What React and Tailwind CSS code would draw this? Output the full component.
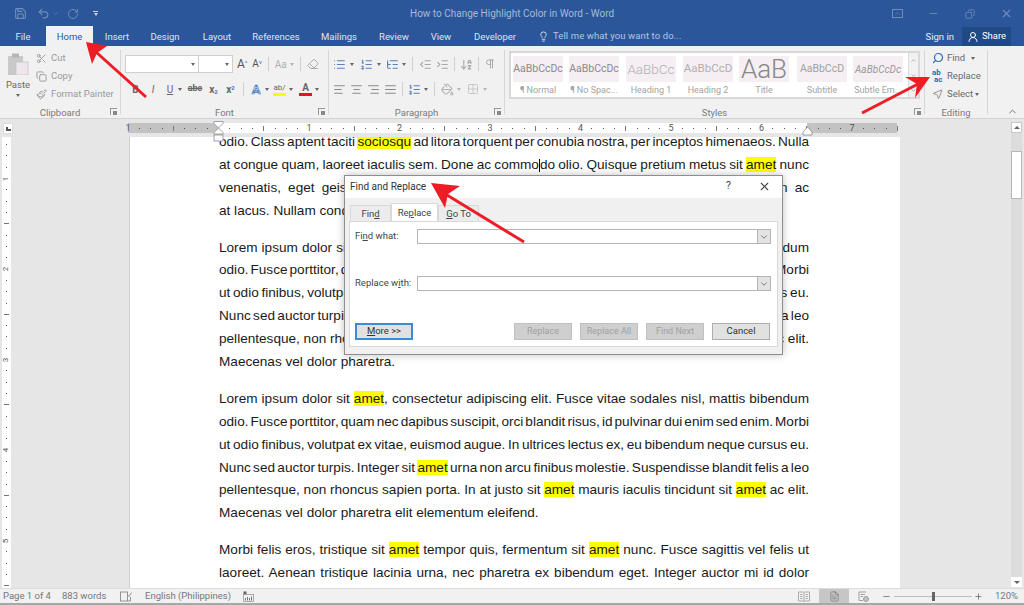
import React from "react";
import {
  Save, Undo2, RotateCw, Scissors, Copy, Paintbrush, Search, Lightbulb, MousePointer2, X, Minus, Plus,
  ChevronDown, ChevronUp, AlignLeft, AlignCenter, AlignRight, AlignJustify, List, ListOrdered, ListTree,
  IndentDecrease, IndentIncrease, ArrowDownAZ, Pilcrow, PaintBucket, Grid2x2, UserRound,
  Eraser, FileText,
} from "lucide-react";

const Caret = ({ c = "border-t-[#666]" }) => (
  <span className={`inline-block w-0 h-0 border-x-[2.5px] border-x-transparent border-t-[3px] ${c}`} />
);

const Launcher = () => (
  <span className="absolute right-[3px] bottom-[3px] w-[7px] h-[7px] border-l border-t border-[#999]">
    <span className="block w-[4px] h-[4px] ml-[2px] mt-[2px] bg-[#8a8a8a]" />
  </span>
);

const Label = ({ children }) => (
  <div className="h-[15px] pt-[4px] leading-[12px] text-center text-[9.5px] text-[#7a7a7a]">{children}</div>
);

const Group = ({ w, label, children }) => (
  <div className={`relative flex flex-col shrink-0 ${w}`}>
    <div className="flex-1 min-h-0">{children}</div>
    <Label>{label}</Label>
    <Launcher />
  </div>
);

const Sep = () => <div className="w-px my-[4px] bg-[#d6d6d6] shrink-0" />;
const VBar = ({ cls = "mx-[6px]" }) => <span className={`${cls} w-px h-[14px] bg-[#d0d0d0] shrink-0`} />;

const Tab = ({ w, children }) => <div className={`${w} text-center leading-[19px] whitespace-nowrap`}>{children}</div>;

const Style = ({ sample, label, cls = "text-[10.5px] text-[#8a8a8a]", ml = "ml-[6px]" }) => (
  <div className={`w-[50px] ${ml} shrink-0 flex flex-col items-center`}>
    <div className={`w-full h-[26px] bg-[#f5eff3] overflow-hidden whitespace-nowrap flex items-center justify-center ${cls}`}>
      {sample}
    </div>
    <div className="mt-[1px] text-[9px] leading-[14px] text-[#a3a3a3] whitespace-nowrap">{label}</div>
  </div>
);

const H = ({ children }) => <span className="bg-[#ffff00]">{children}</span>;

const Line = ({ children, last }) => (
  <div className={`h-[22.9px] leading-[22.9px] whitespace-nowrap ${last ? "" : "text-justify [text-align-last:justify] [word-spacing:-2.2px]"}`}>
    {children}
  </div>
);

const Para = ({ children }) => <div className="mb-[14px]">{children}</div>;

const Arrow = ({ line, head }) => (
  <g>
    <line x1={line[0]} y1={line[1]} x2={line[2]} y2={line[3]} stroke="#ee1c25" strokeWidth="3" />
    <polygon points={head} fill="#ee1c25" />
  </g>
);

const PasteIcon = () => (
  <svg width="22" height="22" viewBox="0 0 22 22">
    <rect x="1" y="3" width="15" height="19" fill="#c9c9c9" />
    <rect x="5" y="0.5" width="7" height="4" fill="#b5b5b5" />
    <rect x="9" y="9" width="12" height="13" fill="#efe6ec" stroke="#c4bcc2" strokeWidth="0.7" />
  </svg>
);

const BookIcon = ({ cls = "" }) => (
  <svg width="12" height="11" viewBox="0 0 12 11" fill="none" stroke="#8a8a8a" strokeWidth="0.9" className={cls}>
    <rect x="0.5" y="1" width="7" height="9" />
    <path d="M7.5 4 L9 5.5 L11.5 1.5" />
    <path d="M7.5 10 H10.5 V6" />
  </svg>
);

const ReadIcon = ({ cls = "" }) => (
  <svg width="12" height="11" viewBox="0 0 12 11" fill="none" stroke="#a5a5a5" strokeWidth="0.9" className={cls}>
    <path d="M0.5 1 H5.5 L6 1.5 L6.5 1 H11.5 V10 H6.5 L6 10.5 L5.5 10 H0.5 Z M6 1.5 V10.5" />
    <path d="M2 3.5 H4.5 M2 5.5 H4.5 M2 7.5 H4.5 M7.5 3.5 H10 M7.5 5.5 H10 M7.5 7.5 H10" />
  </svg>
);

const WebIcon = ({ cls = "" }) => (
  <svg width="11" height="11" viewBox="0 0 11 11" fill="none" stroke="#999" strokeWidth="0.9" className={cls}>
    <path d="M8 1 H1 V9.5 H5" />
    <path d="M2.5 3.5 H7 M2.5 5.5 H5" />
    <circle cx="8" cy="8" r="2.5" fill="#c0c0c0" />
  </svg>
);

const MacroIcon = ({ cls = "" }) => (
  <svg width="11" height="11" viewBox="0 0 11 11" className={cls}>
    <rect x="0.5" y="0.5" width="3" height="3" fill="#666" />
    <rect x="0.5" y="3.5" width="10" height="7" fill="none" stroke="#999" strokeWidth="0.8" />
    <path d="M2.5 9.5 V7 M4.5 9.5 V6 M6.5 9.5 V7 M8.5 9.5 V5.5" stroke="#777" strokeWidth="1" />
  </svg>
);

const IndentMarker = () => (
  <svg width="11" height="21" viewBox="0 0 11 21" fill="#fff" stroke="#8c8c8c" strokeWidth="0.8">
    <path d="M1 0.5 H10 V2.5 L5.5 7 L1 2.5 Z" />
    <path d="M5.5 7 L10 11.5 V13 H1 V11.5 Z" />
    <rect x="1" y="14" width="9" height="6" />
  </svg>
);

const HTicks = Array.from({ length: 69 }, (_, i) => i);
const VTicks = Array.from({ length: 40 }, (_, i) => i);

const Tick = ({ i }) => {
  const n = i % 8 === 0 ? Math.abs(i / 8 - 1) : null;
  return (
    <div className="w-[11.325px] shrink-0 flex items-center justify-center">
      {n !== null && i !== 8 ? (
        <span className="text-[9px] leading-none text-[#555]">{n}</span>
      ) : i % 8 === 4 ? (
        <span className="w-px h-[5px] bg-[#777]" />
      ) : i === 8 ? null : (
        <span className="w-px h-px bg-[#555]" />
      )}
    </div>
  );
};

const VTick = ({ i }) => {
  const n = i % 8 === 3 ? (i - 3) / 8 + 1 : null;
  return (
    <div className="h-[11.325px] shrink-0 flex items-center justify-center">
      {n !== null ? (
        <span className="text-[8px] leading-none text-[#555] -rotate-90">{n}</span>
      ) : i % 8 === 7 ? (
        <span className="h-px w-[5px] bg-[#777]" />
      ) : (
        <span className="w-px h-px bg-[#555]" />
      )}
    </div>
  );
};

const DlgInput = () => (
  <div className="ml-[7px] w-[354px] h-[15px] flex justify-end border border-[#b4b4b4] bg-white">
    <div className="w-[13px] bg-[#e3e3e3] border-l border-[#b4b4b4] flex items-center justify-center">
      <ChevronDown size={10} className="text-[#666]" />
    </div>
  </div>
);

const DisabledBtn = ({ children }) => (
  <div className="w-[58px] h-[17px] ml-[8px] bg-[#cfcfcf] border border-[#c0c0c0] flex items-center justify-center text-[9px] text-[#a0a0a0]">
    {children}
  </div>
);

export default function App() {
  return (
    <div className="relative w-[1024px] h-[605px] overflow-hidden flex flex-col bg-[#e6e6e6] font-['Roboto',sans-serif] text-[#555]">
      {/* Title bar */}
      <div className="h-[27px] shrink-0 bg-[#2b579a] flex items-center relative">
        <Save size={13} className="ml-[14px] text-[#6f8dbb]" />
        <Undo2 size={13} className="ml-[10px] text-[#6f8dbb]" />
        <ChevronDown size={7} className="ml-[2px] text-[#6f8dbb]" />
        <RotateCw size={12} className="ml-[8px] text-[#6f8dbb]" />
        <div className="ml-[14px] flex flex-col items-center gap-[1px]">
          <span className="w-[5px] h-px bg-[#c5d2e6]" />
          <Caret c="border-t-[#c5d2e6]" />
        </div>
        <div className="absolute left-[410px] top-[6px] text-[10px] leading-[16px] text-[#a5b9d8] whitespace-nowrap">
          How to Change Highlight Color in Word - Word
        </div>
        <div className="ml-auto flex items-center text-[#6f8dbb]">
          <div className="w-[11px] h-[9px] border border-[#6f8dbb] flex items-center justify-center">
            <ChevronUp size={7} />
          </div>
          <Minus size={11} className="ml-[25px]" />
          <Copy size={10} className="ml-[26px] -scale-x-100" />
          <X size={13} className="ml-[25px] mr-[11px]" />
        </div>
      </div>

      {/* Tabs */}
      <div className="h-[19px] shrink-0 bg-[#2b579a] flex items-stretch text-[9.5px] text-[#dce4f0] relative">
        <Tab w="w-[46px]">File</Tab>
        <div className="w-[47px] -mt-[1px] bg-[#f1f1f1] text-[#2b579a] text-center leading-[21px]">Home</div>
        <Tab w="w-[48px]">Insert</Tab>
        <Tab w="w-[48px]">Design</Tab>
        <Tab w="w-[56px]">Layout</Tab>
        <Tab w="w-[62px]">References</Tab>
        <Tab w="w-[64px]">Mailings</Tab>
        <Tab w="w-[46px]">Review</Tab>
        <Tab w="w-[48px]">View</Tab>
        <Tab w="w-[60px]">Developer</Tab>
        <div className="ml-[13px] flex items-center text-[#b4c5de]">
          <Lightbulb size={11} className="text-[#dce4f0]" />
          <span className="ml-[4px] tracking-[0.1px]">Tell me what you want to do...</span>
        </div>
        <div className="ml-auto leading-[19px] text-[#e8edf5]">Sign in</div>
        <div className="ml-[8px] mr-[13px] w-[49px] bg-[#1f4a85] flex items-center justify-center gap-[3px] text-white">
          <UserRound size={12} />
          <span>Share</span>
        </div>
      </div>

      {/* Ribbon */}
      <div className="h-[73px] shrink-0 bg-[#f1f1f1] border-b border-[#d2d2d2] flex text-[#8c8c8c] text-[9.5px]">
        <Group w="w-[120px]" label="Clipboard">
          <div className="flex h-full">
            <div className="w-[36px] flex flex-col items-center pt-[7px]">
              <PasteIcon />
              <div className="mt-[4px] text-[#6a6a6a] leading-[12px]">Paste</div>
              <div className="mt-[3px] flex"><Caret /></div>
            </div>
            <div className="flex flex-col pt-[3px] text-[#9a9a9a]">
              <div className="h-[18px] flex items-center gap-[4px]"><Scissors size={11} /><span>Cut</span></div>
              <div className="h-[18px] flex items-center gap-[4px]"><Copy size={11} /><span>Copy</span></div>
              <div className="h-[18px] flex items-center gap-[4px] whitespace-nowrap"><Paintbrush size={11} /><span>Format Painter</span></div>
            </div>
          </div>
        </Group>
        <Sep />
        <Group w="w-[207px]" label="Font">
          <div className="pt-[9px] pl-[4px] flex flex-col">
            <div className="flex items-center h-[18px]">
              <div className="w-[74px] h-[18px] bg-white border border-[#d0d0d0] flex items-center justify-end pr-[3px]"><Caret /></div>
              <div className="w-[34px] h-[18px] bg-white border border-l-0 border-[#d0d0d0] flex items-center justify-end pr-[3px]"><Caret /></div>
              <span className="ml-[4px] text-[12px] text-[#555] leading-none">A<sup className="text-[#2b6cb0] text-[6px]">^</sup></span>
              <span className="ml-[5px] text-[10px] text-[#555] leading-none">A<sup className="text-[#2b6cb0] text-[6px]">v</sup></span>
              <VBar />
              <span className="text-[#b0b0b0] text-[10px]">Aa</span>
              <span className="ml-[3px] flex"><Caret c="border-t-[#b0b0b0]" /></span>
              <VBar />
              <Eraser size={12} className="text-[#aaa]" />
            </div>
            <div className="flex items-center h-[18px] mt-[7px] text-[#666] text-[10px]">
              <span className="ml-[2px] font-bold w-[17px] text-center">B</span>
              <span className="italic w-[18px] text-center">I</span>
              <span className="underline w-[16px] text-center">U</span>
              <span className="flex"><Caret /></span>
              <span className="ml-[3px] line-through w-[20px] text-center text-[9px] font-bold">abc</span>
              <span className="w-[17px] text-center font-bold">x<sub className="text-[6px] text-[#4472c4]">2</sub></span>
              <span className="w-[17px] text-center font-bold">x<sup className="text-[6px] text-[#4472c4]">2</sup></span>
              <VBar cls="mx-[4px]" />
              <span className="ml-[1px] w-[14px] text-center text-[13px] font-bold text-[#bfd4ee] leading-none [-webkit-text-stroke:0.6px_#3f78bd]">A</span>
              <span className="ml-[2px] flex"><Caret /></span>
              <span className="ml-[4px] w-[13px] flex flex-col items-center leading-[10px]"><span className="text-[8px]">ab/</span><span className="w-full h-[3px] bg-[#ffff00]" /></span>
              <span className="ml-[3px] flex"><Caret /></span>
              <span className="ml-[6px] w-[13px] flex flex-col items-center leading-[10px]"><span className="font-bold">A</span><span className="w-full h-[3px] bg-[#e81123]" /></span>
              <span className="ml-[3px] flex"><Caret /></span>
            </div>
          </div>
        </Group>
        <Sep />
        <Group w="w-[175px]" label="Paragraph">
          <div className="pt-[9px] pl-[4px] flex flex-col text-[#8a8a8a]">
            <div className="flex items-center h-[18px]">
              <List size={13} className="text-[#5b7fb5]" /><span className="ml-[4px] flex"><Caret /></span>
              <ListOrdered size={13} className="ml-[6px] text-[#5b7fb5]" /><span className="ml-[4px] flex"><Caret /></span>
              <ListTree size={13} className="ml-[5px] text-[#5b7fb5]" /><span className="ml-[3px] flex"><Caret /></span>
              <VBar cls="mx-[6px]" />
              <IndentDecrease size={13} className="text-[#a8a8a8]" />
              <IndentIncrease size={13} className="ml-[4px] text-[#a8a8a8]" />
              <VBar cls="mx-[5px]" />
              <ArrowDownAZ size={13} className="text-[#a8a8a8]" />
              <VBar cls="mx-[5px]" />
              <Pilcrow size={12} className="text-[#a8a8a8]" />
            </div>
            <div className="flex items-center h-[18px] mt-[7px]">
              <AlignLeft size={13} /><AlignCenter size={13} className="ml-[4px]" /><AlignRight size={13} className="ml-[4px]" /><AlignJustify size={13} className="ml-[4px]" />
              <VBar cls="mx-[5px]" />
              <ListOrdered size={13} className="text-[#5b7fb5]" /><span className="ml-[3px] flex"><Caret /></span>
              <VBar cls="mx-[6px]" />
              <PaintBucket size={13} className="text-[#b5b5b5]" /><span className="ml-[3px] flex"><Caret c="border-t-[#b5b5b5]" /></span>
              <Grid2x2 size={12} className="ml-[6px] text-[#c5c5c5]" /><span className="ml-[4px] flex"><Caret c="border-t-[#b5b5b5]" /></span>
            </div>
          </div>
        </Group>
        <Sep />
        <Group w="w-[419px]" label="Styles">
          <div className="pt-[5px] pl-[4px] pr-[4px] flex justify-start">
            <div className="w-[411px] h-[48px] bg-white border-2 border-[#d8d8d8] flex pt-[3px] overflow-hidden">
              <Style sample="AaBbCcDc" label="¶ Normal" ml="ml-[2px]" />
              <Style sample="AaBbCcDc" label="¶ No Spac..." />
              <Style sample="AaBbCc" label="Heading 1" cls="text-[13.5px] text-[#b0b0b0] font-light" ml="ml-[7px]" />
              <Style sample="AaBbCcD" label="Heading 2" cls="text-[11.5px] text-[#b0b0b0]" ml="ml-[7px]" />
              <Style sample="AaB" label="Title" cls="text-[26px] text-[#888] font-light" ml="ml-[6px]" />
              <Style sample="AaBbCcD" label="Subtitle" cls="text-[10.5px] text-[#a0a0a0]" ml="ml-[8px]" />
              <Style sample="AaBbCcDc" label="Subtle Em..." cls="text-[10px] italic text-[#999]" ml="ml-[6px]" />
              <div className="ml-auto w-[10px] flex flex-col border-l border-[#dcdcdc] -mt-[3px] bg-[#f1f1f1] text-[#888]">
                <div className="h-[15px] flex items-center justify-center"><ChevronUp size={7} /></div>
                <div className="h-[15px] flex items-center justify-center"><ChevronDown size={7} /></div>
                <div className="h-[14px] flex items-center justify-center"><ChevronDown size={7} /></div>
              </div>
            </div>
          </div>
        </Group>
        <Sep />
        <div className="relative flex flex-col w-[62px] shrink-0">
          <div className="flex-1 pt-[3px] pl-[7px] text-[#6a6a6a]">
            <div className="h-[18px] flex items-center"><Search size={12} strokeWidth={2.4} className="text-[#2b6cb0] -scale-x-100" /><span className="ml-[3px]">Find</span><span className="ml-[6px] flex"><Caret /></span></div>
            <div className="h-[18px] flex items-center"><span className="w-[15px] text-[8px] leading-[7px] text-[#2b6cb0] font-bold">ab<br />&nbsp;ac</span><span>Replace</span></div>
            <div className="h-[18px] flex items-center"><MousePointer2 size={12} strokeWidth={1.5} className="text-[#777] -scale-x-100" /><span className="ml-[3px]">Select</span><span className="ml-[2px] flex"><Caret /></span></div>
          </div>
          <Label>Editing</Label>
        </div>
        <Sep />
        <div className="flex-1 flex items-end justify-end pb-[1px] pr-[6px]">
          <ChevronUp size={11} className="text-[#666]" />
        </div>
      </div>

      {/* Workspace */}
      <div className="flex-1 min-h-0 flex">
        <div className="w-[1011px] flex flex-col min-h-0">
          {/* Horizontal ruler */}
          <div className="h-[18px] shrink-0 flex items-center relative">
            <div className="ml-[3px] w-[10px] h-[11px] bg-white border border-[#ddd] flex items-end justify-center pb-[2px]">
              <span className="w-[5px] h-[4px] border-l-2 border-b-2 border-[#555]" />
            </div>
            <div className="relative ml-[115px] w-[769px] h-[10px] bg-white">
              <div className="absolute inset-y-0 left-0 w-[90px] bg-[#c3c3c3]" />
              <div className="absolute inset-y-0 right-0 w-[90px] bg-[#c3c3c3]" />
              <div className="absolute inset-y-0 -left-[5.6px] flex">
                {HTicks.map((i) => <Tick key={i} i={i} />)}
              </div>
              <div className="absolute left-[85px] -top-[2px] z-10"><IndentMarker /></div>
              <svg className="absolute left-[674px] top-[3px] z-10" width="11" height="10" viewBox="0 0 11 10" fill="#fff" stroke="#8c8c8c" strokeWidth="0.8">
                <path d="M5.5 1 L10 6 V9 H1 V6 Z" />
              </svg>
            </div>
          </div>
          <div className="flex-1 min-h-0 flex">
            {/* Vertical ruler */}
            <div className="ml-[2px] w-[9px] bg-white flex flex-col overflow-hidden pt-[2px]">
              {VTicks.map((i) => <VTick key={i} i={i} />)}
            </div>
            {/* Page */}
            <div className="ml-[118px] w-[771px] h-full bg-white border-l border-[#cfcfcf] overflow-hidden pl-[89px] pr-[91px] font-['Liberation_Sans',Arial,sans-serif] text-[13.6px] text-[#1a1a1a]">
              <div className="-mt-[6px]">
                <Para>
                  <Line>odio. Class aptent taciti <H>sociosqu</H> ad litora torquent per conubia nostra, per inceptos himenaeos. Nulla</Line>
                  <Line>at congue quam, laoreet iaculis sem. Done ac commo<span className="inline-block w-0 h-[13px] align-middle border-l border-black" />do olio. Quisque pretium metus sit <H>amet</H> nunc</Line>
                  <Line>venenatis, eget geisha ipsum sem tempor, sagittis lacus nec, tincidunt erat lorem sed in ac</Line>
                  <Line last>at lacus. Nullam condimentum.</Line>
                </Para>
                <Para>
                  <Line>Lorem ipsum dolor sit amet, consectetur adipiscing elit. Fusce vitae sodales nisl, mattis bibendum</Line>
                  <Line>odio. Fusce porttitor, quam nec dapibus suscipit, orci blandit risus, id pulvinar dui enim sed enim. Morbi</Line>
                  <Line>ut odio finibus, volutpat ex vitae, euismod augue. In ultrices lectus ex, eu bibendum neque cursus eu.</Line>
                  <Line>Nunc sed auctor turpis. Integer sit amet urna non arcu finibus molestie. Suspendisse blandit felis a leo</Line>
                  <Line>pellentesque, non rhoncus sapien porta. In at justo sit amet mauris iaculis tincidunt sit amet ac elit.</Line>
                  <Line last>Maecenas vel dolor pharetra.</Line>
                </Para>
                <Para>
                  <Line>Lorem ipsum dolor sit <H>amet</H>, consectetur adipiscing elit. Fusce vitae sodales nisl, mattis bibendum</Line>
                  <Line>odio. Fusce porttitor, quam nec dapibus suscipit, orci blandit risus, id pulvinar dui enim sed enim. Morbi</Line>
                  <Line>ut odio finibus, volutpat ex vitae, euismod augue. In ultrices lectus ex, eu bibendum neque cursus eu.</Line>
                  <Line>Nunc sed auctor turpis. Integer sit <H>amet</H> urna non arcu finibus molestie. Suspendisse blandit felis a leo</Line>
                  <Line>pellentesque, non rhoncus sapien porta. In at justo sit <H>amet</H> mauris iaculis tincidunt sit <H>amet</H> ac elit.</Line>
                  <Line last>Maecenas vel dolor pharetra elit elementum eleifend.</Line>
                </Para>
                <Para>
                  <Line>Morbi felis eros, tristique sit <H>amet</H> tempor quis, fermentum sit <H>amet</H> nunc. Fusce sagittis vel felis ut</Line>
                  <Line>laoreet. Aenean tristique lacinia urna, nec pharetra ex bibendum eget. Integer auctor mi id dolor</Line>
                </Para>
              </div>
            </div>
          </div>
        </div>
        {/* Scrollbar */}
        <div className="w-[13px] ml-auto flex flex-col pt-[3px] pb-[1px] bg-[#e6e6e6]">
          <div className="w-[11px] flex-1 flex flex-col bg-[#dcdcdc]">
            <div className="h-[11px] bg-white border border-[#c8c8c8] flex items-center justify-center">
              <span className="w-0 h-0 border-x-[3px] border-x-transparent border-b-[3px] border-b-[#666]" />
            </div>
            <div className="mt-[18px] h-[48px] bg-white border border-[#b8b8b8]" />
            <div className="mt-auto h-[10px] bg-white flex items-center justify-center">
              <span className="w-0 h-0 border-x-[3px] border-x-transparent border-t-[3px] border-t-[#666]" />
            </div>
          </div>
        </div>
      </div>

      {/* Status bar */}
      <div className="h-[17px] shrink-0 bg-[#f1f1f1] border-t border-[#dcdcdc] border-b-2 border-b-[#a8a8a8] flex items-center text-[9.5px] text-[#777]">
        <span className="ml-[3px] w-[44px] whitespace-nowrap">Page 1 of 4</span>
        <span className="ml-[15px] w-[43px] whitespace-nowrap">883 words</span>
        <BookIcon cls="ml-[15px]" />
        <span className="ml-[13px] w-[86px] whitespace-nowrap">English (Philippines)</span>
        <MacroIcon cls="ml-[12px]" />
        <ReadIcon cls="ml-auto" />
        <div className="ml-[9px] w-[30px] h-full bg-[#c6c6c6] flex items-center justify-center"><FileText size={11} className="text-[#888]" /></div>
        <WebIcon cls="ml-[9px]" />
        <Minus size={9} className="ml-[13px] text-[#666]" />
        <div className="ml-[3px] w-[78px] h-px bg-[#bdbdbd] flex items-center justify-center">
          <span className="w-[3px] h-[9px] bg-[#666]" />
        </div>
        <Plus size={9} className="ml-[2px] text-[#666]" />
        <span className="ml-[12px] mr-[6px]">120%</span>
      </div>

      {/* Dialog */}
      <div className="absolute left-[344px] top-[175px] w-[439px] h-[180px] bg-[#f0f0f0] border border-[#8e8e8e] shadow-[0_0_8px_rgba(0,0,0,0.25)] flex flex-col text-[9.5px] text-[#444]">
        <div className="h-[22px] shrink-0 bg-white flex items-center pl-[5px] pb-[2px]">
          <span className="text-[10px] text-[#333]">Find and Replace</span>
          <span className="ml-auto text-[11px] text-[#444]">?</span>
          <X size={13} className="ml-[27px] mr-[11px] text-[#444]" />
        </div>
        <div className="flex items-end h-[23px] shrink-0 pl-[5px]">
          <div className="w-[41px] h-[16px] bg-[#ececec] border border-[#d9d9d9] border-b-0 text-center leading-[15px]">Fin<u>d</u></div>
          <div className="w-[47px] h-[18px] bg-white border border-[#d9d9d9] border-b-0 text-center leading-[18px]">Re<u>p</u>lace</div>
          <div className="w-[41px] h-[16px] bg-[#ececec] border border-[#d9d9d9] border-b-0 text-center leading-[15px]"><u>G</u>o To</div>
        </div>
        <div className="flex-1 mx-[4px] mb-[7px] bg-white border border-[#d9d9d9] px-[5px] pt-[7px] flex flex-col">
          <div className="flex items-center">
            <span className="w-[55px] whitespace-nowrap">Fi<u>n</u>d what:</span>
            <DlgInput />
          </div>
          <div className="flex items-center mt-[32px]">
            <span className="w-[55px] whitespace-nowrap">Replace w<u>i</u>th:</span>
            <DlgInput />
          </div>
          <div className="flex items-center mt-[32px]">
            <div className="w-[58px] h-[17px] bg-[#e1e1e1] border-2 border-[#3d8ad6] flex items-center justify-center text-[#333]"><u>M</u>ore &gt;&gt;</div>
            <div className="ml-[93px] flex">
              <DisabledBtn>Replace</DisabledBtn>
              <DisabledBtn>Replace All</DisabledBtn>
              <DisabledBtn>Find Next</DisabledBtn>
            </div>
            <div className="w-[58px] h-[17px] ml-[8px] bg-[#e1e1e1] border border-[#adadad] flex items-center justify-center text-[#333]">Cancel</div>
          </div>
        </div>
      </div>

      {/* Red annotation arrows */}
      <svg className="absolute inset-0 pointer-events-none" width="1024" height="605" viewBox="0 0 1024 605">
        <Arrow line={[146, 97, 96, 52]} head="86,42 92,64 97,53 107,46" />
        <Arrow line={[524, 242, 442, 192]} head="431,183 460,186 448,194 445,208" />
        <Arrow line={[862, 113, 918, 84]} head="930,77 905,77 917,84 915,98" />
      </svg>
    </div>
  );
}
